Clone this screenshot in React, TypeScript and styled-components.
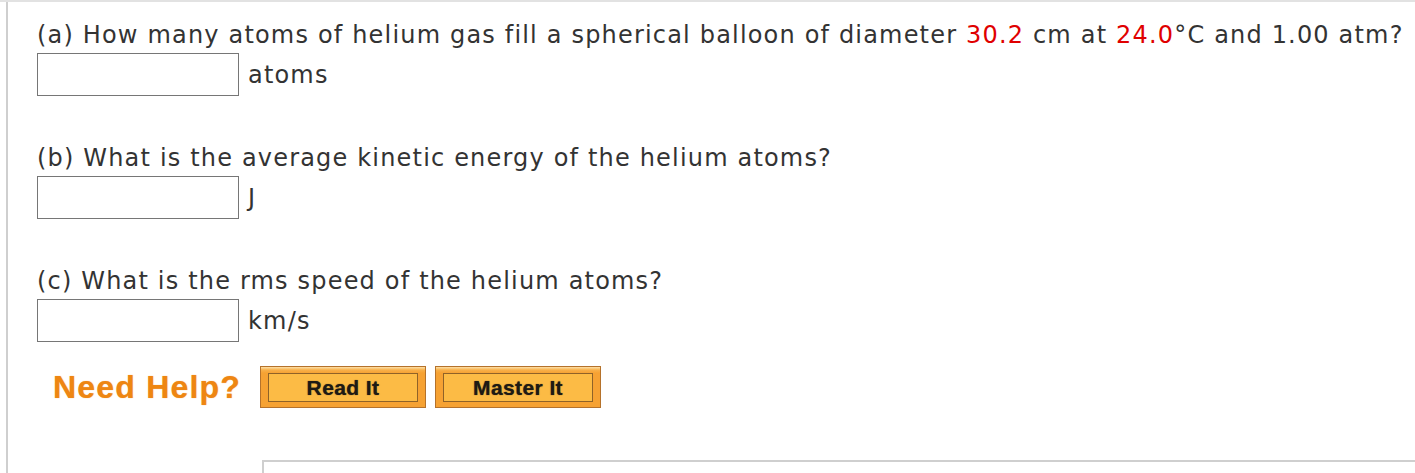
import React from 'react'
import styled, { createGlobalStyle } from 'styled-components'

const GlobalStyle = createGlobalStyle`
  html, body {
    margin: 0;
    padding: 0;
    background: #ffffff;
  }
  body {
    overflow: hidden;
  }
`

const Frame = styled.div`
  border-top: 2px solid #e2e2e2;
  min-height: 100vh;
  box-sizing: border-box;
`

const Sheet = styled.div`
  margin-left: 6px;
  border-left: 2px solid #cfcfcf;
  min-height: calc(100vh - 2px);
  padding: 17px 0 0 29px;
  box-sizing: border-box;
  font-family: "DejaVu Sans", Verdana, sans-serif;
  font-size: 24px;
  letter-spacing: 1.18px;
  color: #333333;
`

const Part = styled.div`
  & + & {
    margin-top: 46px;
  }
`

const Question = styled.div`
  line-height: 32px;
  white-space: nowrap;
`

const Given = styled.span`
  color: #e00000;
`

const AnswerRow = styled.div`
  display: flex;
  align-items: center;
  margin-top: 2px;
  line-height: 32px;
`

const AnswerBox = styled.input`
  width: 202px;
  height: 43px;
  box-sizing: border-box;
  border: 1px solid #767676;
  margin: 0;
  padding: 0 4px;
  font: inherit;
  background: #fff;
`

const Unit = styled.span`
  margin-left: 9px;
`

const HelpRow = styled.div`
  display: flex;
  align-items: center;
  height: 42px;
  margin-top: 24px;
`

const HelpLabel = styled.span`
  font-family: "Liberation Sans", Arial, sans-serif;
  font-weight: bold;
  font-size: 32px;
  letter-spacing: 1.2px;
  color: #ee8612;
  text-shadow: 0 0 1px rgba(238, 134, 18, 0.7);
  margin-left: 16px;
  margin-right: 19px;
`

const HelpButton = styled.button`
  width: 166px;
  height: 42px;
  box-sizing: border-box;
  margin: 0 9px 0 0;
  padding: 6px 7px 5px 7px;
  border: 1px solid #b5722b;
  background: linear-gradient(#fde0a8 0, #f8b049 3px, #f6a233 6px, #f6a233 100%);
  cursor: pointer;
  display: flex;
`

const HelpFace = styled.span`
  flex: 1;
  display: flex;
  align-items: center;
  justify-content: center;
  border: 1px solid #8f6228;
  background: #fcbb45;
  font-family: "Liberation Sans", Arial, sans-serif;
  font-weight: bold;
  font-size: 21px;
  letter-spacing: 0.4px;
  color: #1e1a14;
  text-shadow: 0 0 1px rgba(30, 26, 20, 0.8);
`

const NextPanel = styled.div`
  margin: 52px 0 0 225px;
  height: 40px;
  border-top: 2px solid #cfcfcf;
  border-left: 2px solid #cfcfcf;
`

type PartProps = {
  question: React.ReactNode
  unit: string
}

const QuestionPart = ({ question, unit }: PartProps) => (
  <Part>
    <Question>{question}</Question>
    <AnswerRow>
      <AnswerBox type="text" />
      <Unit>{unit}</Unit>
    </AnswerRow>
  </Part>
)

const App = () => {
  return (
    <>
      <GlobalStyle />
      <Frame>
        <Sheet>
          <QuestionPart
            question={
              <>
                (a) How many atoms of helium gas fill a spherical balloon of diameter{' '}
                <Given>30.2</Given> cm at <Given>24.0</Given>°C and 1.00 atm?
              </>
            }
            unit="atoms"
          />
          <QuestionPart
            question="(b) What is the average kinetic energy of the helium atoms?"
            unit="J"
          />
          <QuestionPart
            question="(c) What is the rms speed of the helium atoms?"
            unit="km/s"
          />
          <HelpRow>
            <HelpLabel>Need Help?</HelpLabel>
            <HelpButton>
              <HelpFace>Read It</HelpFace>
            </HelpButton>
            <HelpButton>
              <HelpFace>Master It</HelpFace>
            </HelpButton>
          </HelpRow>
          <NextPanel />
        </Sheet>
      </Frame>
    </>
  )
}

export default App
